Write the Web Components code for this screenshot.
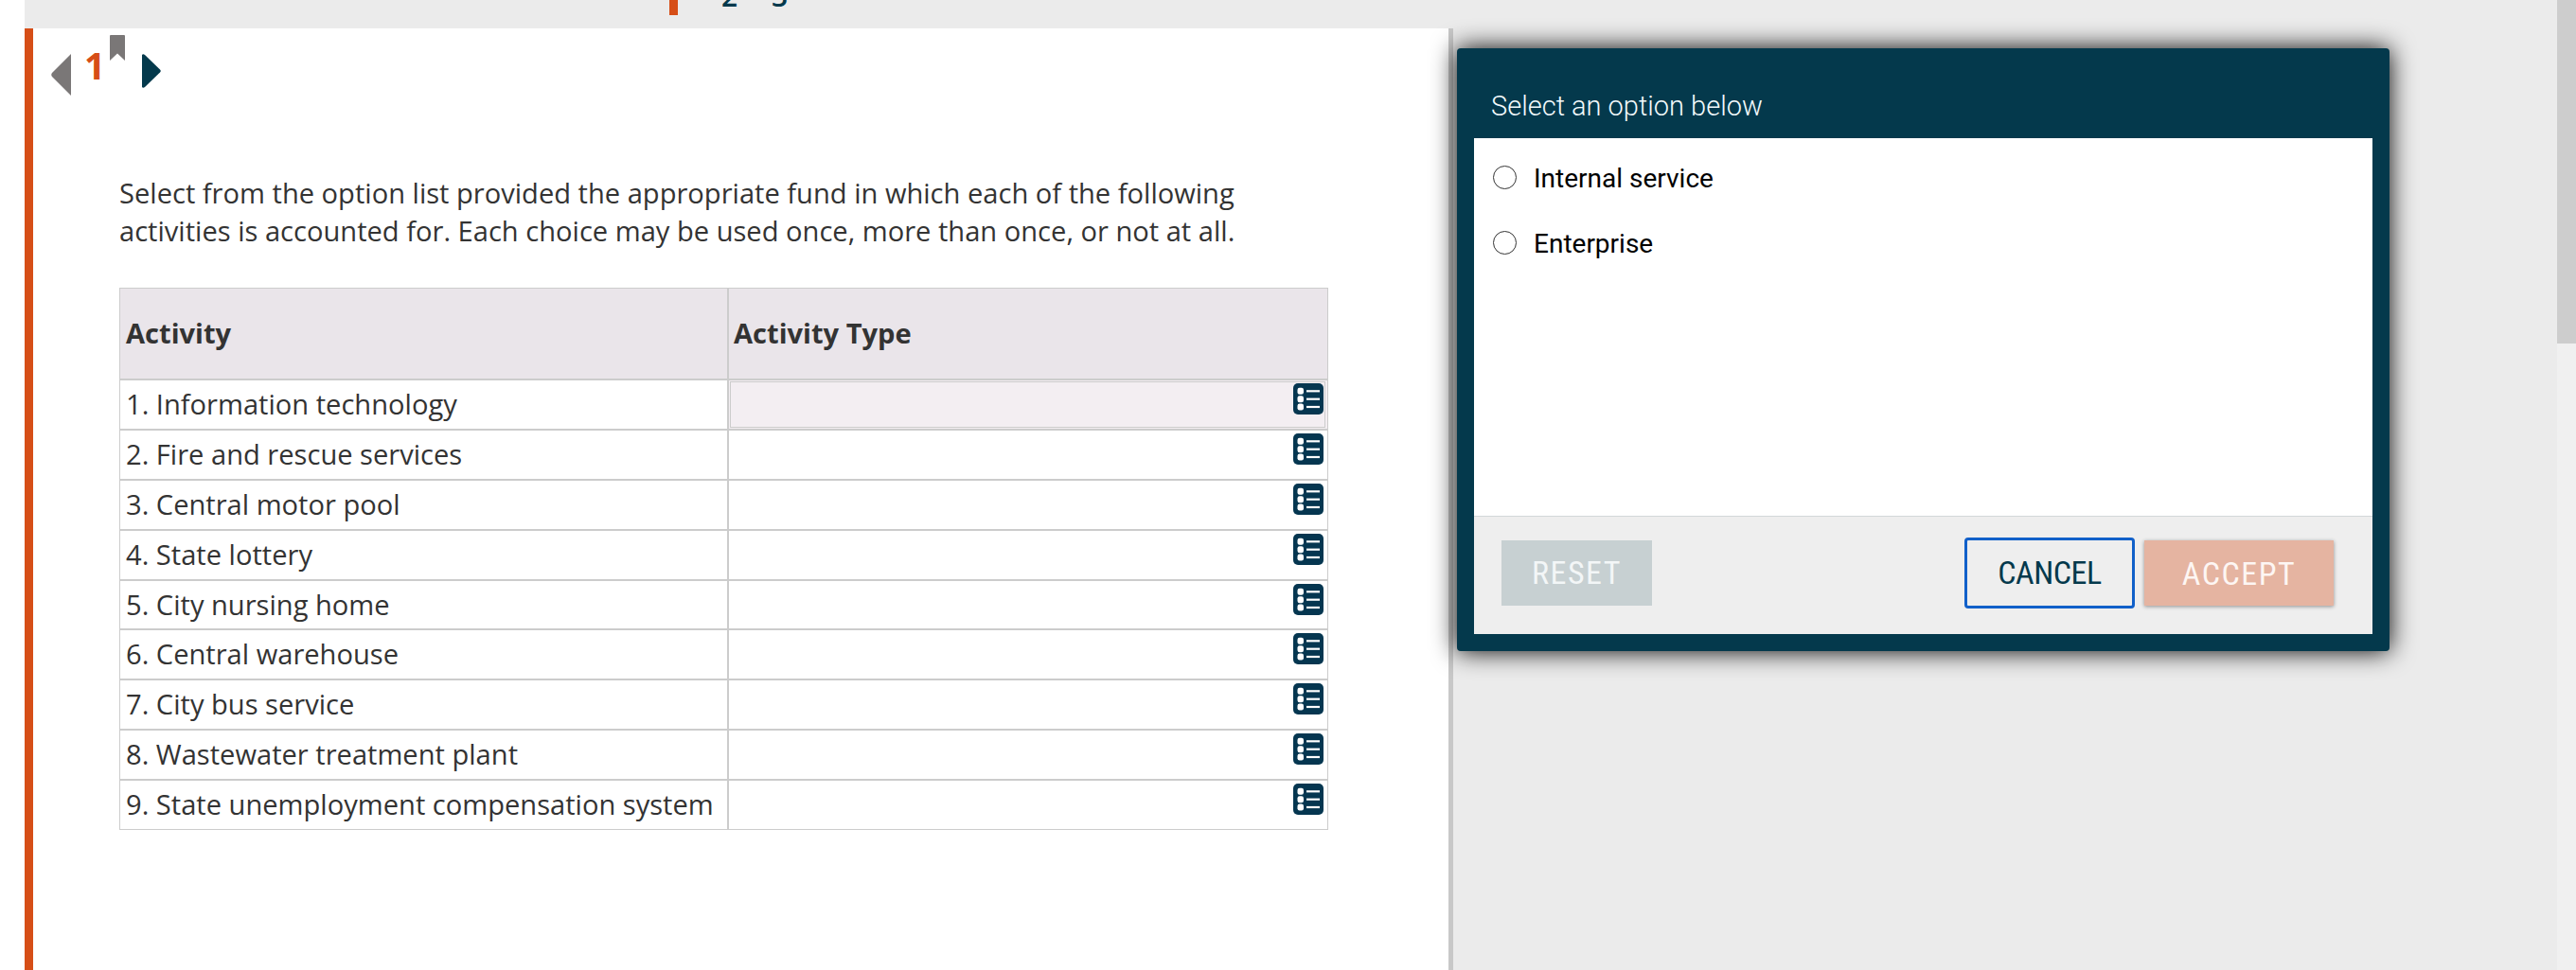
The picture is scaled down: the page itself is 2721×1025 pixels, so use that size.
<!DOCTYPE html>
<html lang="en">
<head>
<meta charset="utf-8">
<title>Question 1</title>
<style>
  :root {
    --color-navy: #04394c;
    --color-accent: #d64e17;
    --color-muted: #7a7777;
    --color-line: #cccccc;
    --color-surface: #ebebeb;
    --font-body: "Open Sans", "Noto Sans", sans-serif;
    --font-ui: Roboto, "Liberation Sans", sans-serif;
  }
  html, body {
    margin: 0;
    height: 100%;
    overflow: hidden;
    background: #fff;
  }
</style>
</head>
<body>
<quiz-page>
  <question-pager slot="top" pages="2,3"></question-pager>
  <question-nav slot="question" number="1"></question-nav>
  <question-prompt slot="question">Select from the option list provided the appropriate fund in which each of the following<br>activities is accounted for. Each choice may be used once, more than once, or not at all.</question-prompt>
  <activity-table slot="question" headings="Activity|Activity Type" selected="0"></activity-table>
  <option-dialog slot="side" heading="Select an option below">
    <radio-option>Internal service</radio-option>
    <radio-option>Enterprise</radio-option>
    <action-button slot="reset" kind="reset">RESET</action-button>
    <action-button slot="actions" kind="cancel">CANCEL</action-button>
    <action-button slot="actions" kind="accept">ACCEPT</action-button>
  </option-dialog>
</quiz-page>

<script>
// Small base class: fills an open shadow root from styles() and markup().
class QuizElement extends HTMLElement {
  constructor() {
    super();
    this._shadow = this.attachShadow({ mode: "open" });
  }

  connectedCallback() {
    this._shadow.innerHTML = `<style>:host, * { box-sizing: border-box; } ${this.styles()}</style>${this.markup()}`;
  }
}

// <quiz-page> — top strip, question pane, side pane and scrollbar.
class QuizPage extends QuizElement {
  styles() {
    return `
      :host { display: flex; height: 100vh; }
      .page { flex: 1; min-width: 0; display: flex; flex-direction: column; padding-left: 26px; }
      .top { flex: none; height: 30px; background: var(--color-surface); overflow: hidden; }
      .panes { flex: 1; min-height: 0; display: flex; }
      .question {
        flex: none;
        width: 1509px;
        background: #fff;
        border-left: 9px solid var(--color-accent);
        border-right: 5px solid #c8c8c8;
      }
      .side { flex: 1; padding: 21px 0 0 4px; background: var(--color-surface); }
      .scrollbar { flex: none; width: 20px; background: #f0f0f0; }
      .thumb { height: 363px; background: #cdcdcd; }
    `;
  }

  markup() {
    return `
      <div class="page">
        <div class="top"><slot name="top"></slot></div>
        <div class="panes">
          <div class="question"><slot name="question"></slot></div>
          <div class="side"><slot name="side"></slot></div>
        </div>
      </div>
      <div class="scrollbar"><div class="thumb"></div></div>
    `;
  }
}

// <question-pager> — page numbers, scrolled almost out of view.
class QuestionPager extends QuizElement {
  styles() {
    return `
      :host { display: block; height: 30px; overflow: hidden; }
      .row { display: flex; align-items: flex-start; padding-left: 681px; }
      .marker { width: 9px; height: 16px; margin-right: 46px; background: var(--color-accent); }
      .num {
        width: 53px;
        margin-top: -23px;
        font: 600 30px/38px var(--font-body);
        color: var(--color-navy);
      }
    `;
  }

  markup() {
    const nums = this.getAttribute("pages").split(",");
    return `<div class="row"><div class="marker"></div>${nums.map((n) => `<span class="num">${n}</span>`).join("")}</div>`;
  }
}

// <question-nav> — previous arrow, number, bookmark, next arrow.
class QuestionNav extends QuizElement {
  styles() {
    return `
      :host { display: flex; align-items: flex-start; height: 154px; padding-left: 19px; }
      svg { display: block; flex: none; }
      .prev { margin-top: 27px; fill: var(--color-muted); }
      .num {
        width: 27px;
        margin: 12px 0 0 14px;
        font: bold 39px/54px var(--font-body);
        color: var(--color-accent);
      }
      .mark { margin-top: 7px; fill: var(--color-muted); }
      .next { margin: 27px 0 0 18px; fill: var(--color-navy); }
    `;
  }

  markup() {
    return `
      <svg class="prev" width="21" height="44"><path d="M21 0V44L1 24Q-.5 22 1 20Z"/></svg>
      <span class="num">${this.getAttribute("number")}</span>
      <svg class="mark" width="16" height="27"><path d="M1 0H15Q16 0 16 1V27L8 19.500L0 27V1Q0 0 1 0Z"/></svg>
      <svg class="next" width="20" height="36"><path d="M0 1Q1 -.5 3 1L19 16.500Q20.500 18 19 19.500L3 35Q1 36.500 0 35Z"/></svg>
    `;
  }
}

class QuestionPrompt extends QuizElement {
  styles() {
    return `
      :host {
        display: block;
        height: 120px;
        padding-left: 91px;
        font: 29.100px/40px var(--font-body);
        color: #333;
        white-space: nowrap;
      }
    `;
  }

  markup() {
    return `<slot></slot>`;
  }
}

class ListIcon extends QuizElement {
  styles() {
    return `
      :host { display: block; width: 32px; height: 33px; }
      svg { display: block; }
    `;
  }

  markup() {
    const items = [8.3, 16.7, 25].map(
      (y) => `<rect x="4.500" y="${y - 3.5}" width="6.500" height="7" rx="2.200"/><rect x="14" y="${y - 1.1}" width="14" height="2.200"/>`,
    );
    return `
      <svg width="32" height="33" fill="#fff">
        <rect width="32" height="33" rx="5" fill="#053650"/>
        ${items.join("")}
      </svg>
    `;
  }
}

const ACTIVITIES = [
  "1. Information technology",
  "2. Fire and rescue services",
  "3. Central motor pool",
  "4. State lottery",
  "5. City nursing home",
  "6. Central warehouse",
  "7. City bus service",
  "8. Wastewater treatment plant",
  "9. State unemployment compensation system",
];

class ActivityTable extends QuizElement {
  styles() {
    return `
      :host {
        display: grid;
        grid-template-columns: 643px 634px;
        grid-template-rows: 97px repeat(9, 52.9px);
        width: 1277px;
        margin-left: 91px;
        font: 29.100px/40px var(--font-body);
        color: #333;
      }
      .cell {
        display: flex;
        align-items: center;
        border: 1px solid var(--color-line);
        padding-left: 6px;
        padding-bottom: 1px;
        white-space: nowrap;
      }
      .head { padding-bottom: 2px; background: #eae5ea; font-weight: bold; }
      .head + .head { padding-left: 5px; }
      .answer { align-items: flex-start; padding: 1px 2px 2px 1px; }
      .field {
        flex: 1;
        height: 49px;
        display: flex;
        justify-content: flex-end;
        padding: 1px 1px 0 0;
        border: 1px solid transparent;
      }
      .selected, .selected .field { background: #f3eef2; }
      .selected .field { border-color: var(--color-line); }
    `;
  }

  markup() {
    const selected = Number(this.getAttribute("selected"));
    const heads = this.getAttribute("headings").split("|");
    const rows = ACTIVITIES.map(
      (name, i) => `
        <div class="cell">${name}</div>
        <div class="cell answer ${i === selected ? "selected" : ""}">
          <div class="field"><list-icon></list-icon></div>
        </div>`,
    );
    return heads.map((h) => `<div class="cell head">${h}</div>`).join("") + rows.join("");
  }
}

// <option-dialog heading="..."> — options in the default slot, buttons in the footer slots.
class OptionDialog extends QuizElement {
  styles() {
    return `
      :host {
        display: flex;
        flex-direction: column;
        width: 985px;
        height: 637px;
        padding: 0 18px 18px;
        border-radius: 4px;
        background: var(--color-navy);
        box-shadow: 0 0 27px #000;
        font-family: var(--font-ui);
      }
      .heading {
        flex: none;
        height: 95px;
        padding: 43px 0 0 18px;
        font-weight: 300;
        font-size: 29px;
        line-height: 36px;
        color: #f2fafc;
      }
      .options { flex: 1; padding: 20px 0 0 20px; background: #fff; }
      .footer {
        flex: none;
        display: flex;
        align-items: center;
        height: 125px;
        padding: 0 41px 6px 29px;
        border-top: 1px solid #d3d8d9;
        background: #eee;
      }
      .actions { display: flex; align-items: center; gap: 10px; margin-left: auto; }
    `;
  }

  markup() {
    return `
      <div class="heading">${this.getAttribute("heading")}</div>
      <div class="options"><slot></slot></div>
      <div class="footer">
        <slot name="reset"></slot>
        <div class="actions"><slot name="actions"></slot></div>
      </div>
    `;
  }
}

class RadioOption extends QuizElement {
  styles() {
    return `
      :host {
        display: flex;
        align-items: center;
        gap: 18px;
        height: 44px;
        margin-bottom: 25px;
        font-size: 28px;
        color: #000;
      }
      .dot { width: 25px; height: 25px; margin-bottom: 1px; border: 1px solid #333; border-radius: 50%; background: #fff; }
    `;
  }

  markup() {
    return `<span class="dot"></span><span><slot></slot></span>`;
  }
}

class ActionButton extends QuizElement {
  styles() {
    return `
      :host {
        display: flex;
        align-items: center;
        justify-content: center;
        width: 159px;
        height: 69px;
        font: 34px/40px "Roboto Condensed", var(--font-ui);
        font-stretch: 75%;
      }
      :host([kind="reset"]) { background: #c7d0d2; color: #f3f6f7; letter-spacing: 1.500px; }
      :host([kind="cancel"]) {
        width: 180px;
        height: 75px;
        border: 3px solid #1160c9;
        border-radius: 4px;
        color: var(--color-navy);
        letter-spacing: -0.500px;
      }
      :host([kind="accept"]) {
        width: 200px;
        padding-top: 1px;
        background: #e5b4a1;
        color: #fdf6f3;
        letter-spacing: 1.500px;
        box-shadow: 0 1px 4px rgba(0, 0, 0, 0.4);
      }
    `;
  }

  markup() {
    return `<span><slot></slot></span>`;
  }
}

customElements.define("quiz-page", QuizPage);
customElements.define("question-pager", QuestionPager);
customElements.define("question-nav", QuestionNav);
customElements.define("question-prompt", QuestionPrompt);
customElements.define("list-icon", ListIcon);
customElements.define("activity-table", ActivityTable);
customElements.define("option-dialog", OptionDialog);
customElements.define("radio-option", RadioOption);
customElements.define("action-button", ActionButton);
</script>
</body>
</html>
